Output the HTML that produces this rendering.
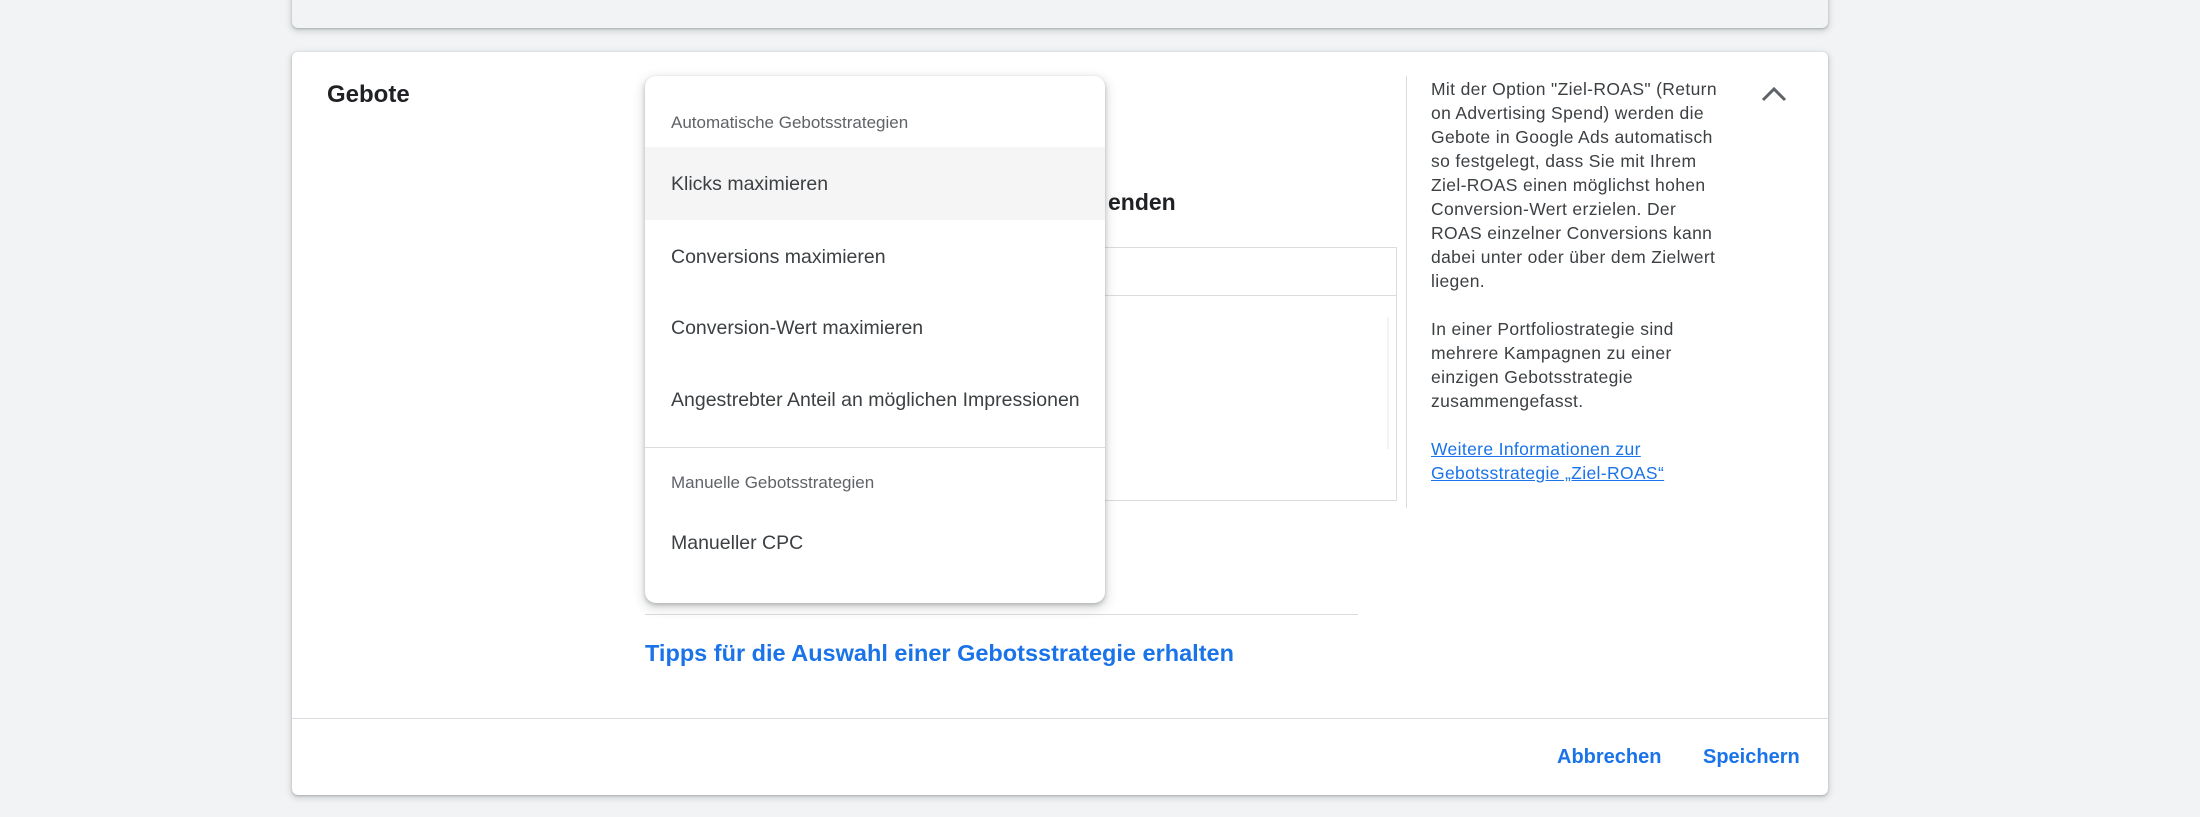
<!DOCTYPE html>
<html><head><meta charset="utf-8"><style>
*{box-sizing:border-box;margin:0;padding:0}
body{width:2200px;height:817px;background:#f1f3f4;font-family:"Liberation Sans",sans-serif;position:relative;overflow:hidden;color:#202124}
.card{position:absolute;background:#fff;border-radius:6px;box-shadow:0 1px 2px rgba(60,64,67,.3),0 2px 6px 2px rgba(60,64,67,.15)}
.a{position:absolute;white-space:nowrap}
</style></head><body>
<div class="card" style="left:292px;top:-20px;width:1536px;height:48px;background:#f1f3f4"></div>
<div class="card" style="left:292px;top:52px;width:1536px;height:743px">
  <div class="a" style="left:35px;top:29px;font-size:24px;font-weight:bold;color:#202124">Gebote</div>
  <div class="a" style="left:816px;top:137px;font-size:23px;font-weight:bold">enden</div>
  <div style="position:absolute;left:353px;top:195px;width:752px;height:254px;border:1px solid #dadce0"></div>
  <div style="position:absolute;left:353px;top:243px;width:752px;height:1px;background:#dadce0"></div>
  <div style="position:absolute;left:1095px;top:265px;width:2px;height:132px;background:#f1f3f4"></div>
  <div style="position:absolute;left:1114px;top:24px;width:1px;height:432px;background:#dadce0"></div>
  <div style="position:absolute;left:1139px;top:25px;white-space:nowrap;font-size:17.5px;letter-spacing:0.35px;line-height:24px;color:#3c4043">Mit der Option "Ziel-ROAS" (Return<br>on Advertising Spend) werden die<br>Gebote in Google Ads automatisch<br>so festgelegt, dass Sie mit Ihrem<br>Ziel-ROAS einen möglichst hohen<br>Conversion-Wert erzielen. Der<br>ROAS einzelner Conversions kann<br>dabei unter oder über dem Zielwert<br>liegen.<br><br>In einer Portfoliostrategie sind<br>mehrere Kampagnen zu einer<br>einzigen Gebotsstrategie<br>zusammengefasst.<br><br><span style="color:#1a73e8;text-decoration:underline">Weitere Informationen zur<br>Gebotsstrategie „Ziel-ROAS“</span></div>
  <svg style="position:absolute;left:1467px;top:30px" width="30" height="24" viewBox="0 0 30 24"><path d="M4 18 L15 7 L26 18" fill="none" stroke="#5f6368" stroke-width="3"/></svg>
  <div style="position:absolute;left:353px;top:562px;width:713px;height:1px;background:#dadce0"></div>
  <div class="a" style="left:353px;top:588px;font-size:23.5px;font-weight:bold;color:#1a73e8">Tipps für die Auswahl einer Gebotsstrategie erhalten</div>
  <div style="position:absolute;left:0;top:666px;width:1536px;height:1px;background:#dadce0"></div>
  <div class="a" style="left:1265px;top:694px;font-size:20px;font-weight:bold;color:#1a73e8">Abbrechen</div>
  <div class="a" style="left:1411px;top:694px;font-size:20px;font-weight:bold;color:#1a73e8">Speichern</div>
</div>
<div class="card" style="left:645px;top:76px;width:460px;height:527px;border-radius:11px;box-shadow:0 2px 4px rgba(60,64,67,.3),0 4px 10px 3px rgba(60,64,67,.15);font-size:19.5px;color:#3c4043">
  <div class="a" style="left:26px;top:37px;font-size:17px;color:#5f6368">Automatische Gebotsstrategien</div>
  <div style="position:absolute;left:0;top:71px;width:460px;height:73px;background:#f5f5f5"></div>
  <div class="a" style="left:26px;top:97px">Klicks maximieren</div>
  <div class="a" style="left:26px;top:170px">Conversions maximieren</div>
  <div class="a" style="left:26px;top:241px">Conversion-Wert maximieren</div>
  <div class="a" style="left:26px;top:313px">Angestrebter Anteil an möglichen Impressionen</div>
  <div style="position:absolute;left:0;top:371px;width:460px;height:1px;background:#dadce0"></div>
  <div class="a" style="left:26px;top:397px;font-size:17px;color:#5f6368">Manuelle Gebotsstrategien</div>
  <div class="a" style="left:26px;top:456px">Manueller CPC</div>
</div>
</body></html>
